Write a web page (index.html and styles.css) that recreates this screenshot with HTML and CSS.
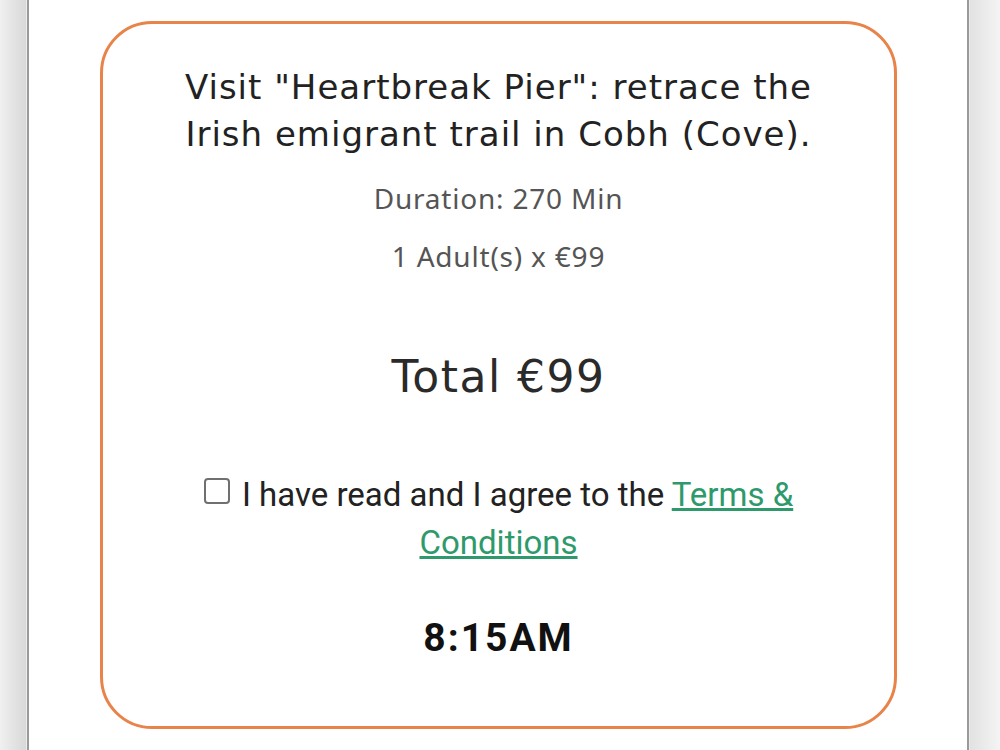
FILE: index.html
```html
<!DOCTYPE html>
<html lang="en">
<head>
  <meta charset="UTF-8">
  <meta name="viewport" content="width=device-width, initial-scale=1.0">
  <title>Booking Summary</title>
  <link rel="stylesheet" href="styles.css">
</head>
<body>
  <div class="sheet">
    <div class="summary">
      <h2 class="tour-title">Visit "Heartbreak Pier": retrace the Irish emigrant trail in Cobh (Cove).</h2>
      <p class="detail">Duration: 270 Min</p>
      <p class="detail">1 Adult(s) x €99</p>

      <div class="total">Total €99</div>

      <label class="terms">
        <input type="checkbox" id="agreeTerms">
        I have read and I agree to the <a href="#">Terms &amp; Conditions</a>
      </label>

      <div class="time">8:15AM</div>
    </div>
  </div>
</body>
</html>
```

FILE: styles.css
```css
html, body {
  margin: 0;
  padding: 0;
  height: 100%;
}
body {
  background: linear-gradient(to right, #f0f0f0 0, #d8d8d8 26px, transparent 26px),
              linear-gradient(to left, #f4f4f4 0, #e2e2e2 30px, transparent 30px);
  background-color: #ececec;
  overflow: hidden;
}
.sheet {
  box-sizing: border-box;
  width: 942px;
  height: 100%;
  margin-left: 27px;
  padding: 21px 70px 0 71px;
  background: #ffffff;
  border-left: 2px solid #9a9a9a;
  border-right: 2px solid #9a9a9a;
}
.summary {
  box-sizing: border-box;
  height: 708px;
  border: 3px solid #e8844a;
  border-radius: 52px;
  padding: 40px 30px 0;
  text-align: center;
}
.tour-title {
  margin: 0 auto;
  width: 660px;
  font-family: "DejaVu Sans", sans-serif;
  font-weight: 400;
  font-size: 34px;
  letter-spacing: 1px;
  line-height: 47px;
  color: #222222;
}
.detail {
  margin: 0;
  font-family: "Noto Sans", sans-serif;
  font-size: 28px;
  letter-spacing: 0.8px;
  line-height: 58px;
  color: #555555;
}
.detail:first-of-type {
  margin-top: 11px;
}
.total {
  margin-top: 62px;
  font-family: "DejaVu Sans", sans-serif;
  font-size: 44px;
  letter-spacing: 1.5px;
  line-height: 60px;
  color: #2a2a2a;
}
.terms {
  display: block;
  margin: 64px auto 0;
  width: 640px;
  font-family: Roboto, sans-serif;
  font-size: 33px;
  line-height: 48px;
  color: #222222;
}
.terms input {
  appearance: none;
  box-sizing: border-box;
  width: 26px;
  height: 26px;
  margin: 0 4px 0 0;
  border: 2px solid #707070;
  border-radius: 4px;
  background: #ffffff;
  vertical-align: 2px;
}
.terms a {
  color: #2e9a6c;
}
.time {
  margin-top: 48px;
  font-family: Roboto, sans-serif;
  font-weight: 700;
  font-size: 39px;
  letter-spacing: 2px;
  color: #111111;
}
```
